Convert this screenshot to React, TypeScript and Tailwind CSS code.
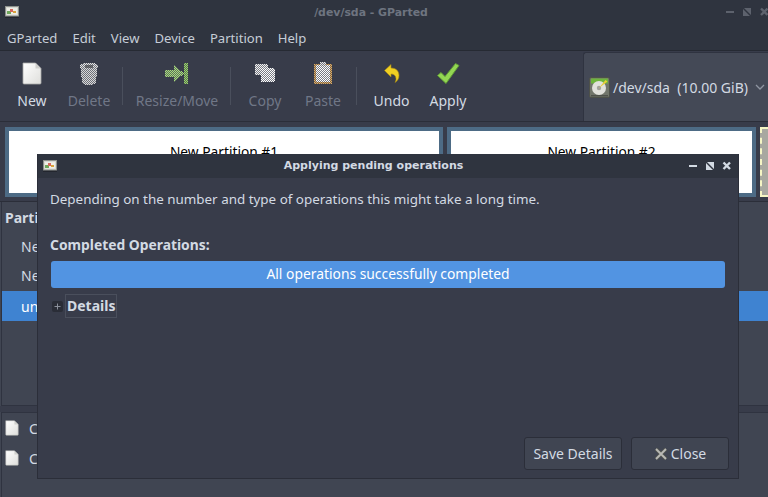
import type { ReactNode } from "react";

function AppIcon() {
  return (
    <svg width="14" height="12" viewBox="0 0 14 12">
      <rect x="0" y="10" width="14" height="2" fill="#23262e" />
      <rect x="0.500" y="0.500" width="13" height="9.500" fill="#d7d9d3" stroke="#8f928d" />
      <rect x="2" y="2" width="10" height="6.500" fill="#eeeee6" />
      <rect x="2" y="5" width="4" height="3" fill="#6fa85c" />
      <rect x="5" y="3" width="3" height="3" fill="#d66a5f" />
      <rect x="8" y="5" width="3" height="2" fill="#d8a23a" />
    </svg>
  );
}

function PageIcon({ w = 20, h = 23, id = "pg" }: { w?: number; h?: number; id?: string }) {
  return (
    <svg width={w} height={h} viewBox="0 0 20 23">
      <defs>
        <linearGradient id={id} x1="0" y1="0" x2="1" y2="1">
          <stop offset="0" stopColor="#ffffff" />
          <stop offset="1" stopColor="#dededb" />
        </linearGradient>
      </defs>
      <path d="M1 1h12.500l5.500 5.500V21a1 1 0 0 1-1 1H2a1 1 0 0 1-1-1z" fill={`url(#${id})`} stroke="#a9aaa8" strokeWidth="0.8" />
      <path d="M13.500 1v5.500H19z" fill="#cfcfcc" />
    </svg>
  );
}

function Dither({ id, w, h, children }: { id: string; w: number; h: number; children: ReactNode }) {
  return (
    <svg width={w} height={h} viewBox={`0 0 ${w} ${h}`} shapeRendering="crispEdges">
      <defs>
        <pattern id={`${id}p`} width="2" height="2" patternUnits="userSpaceOnUse">
          <rect x="0" y="0" width="1" height="1" fill="#fff" />
          <rect x="1" y="1" width="1" height="1" fill="#fff" />
          <rect x="1" y="0" width="1" height="1" fill="#555" />
          <rect x="0" y="1" width="1" height="1" fill="#555" />
        </pattern>
        <mask id={`${id}m`} maskUnits="userSpaceOnUse" x="0" y="0" width={w} height={h}>
          <rect width={w} height={h} fill={`url(#${id}p)`} />
        </mask>
      </defs>
      <g mask={`url(#${id}m)`}>{children}</g>
    </svg>
  );
}

function ToolButton({ icon, label, dim, className }: { icon: ReactNode; label: string; dim?: boolean; className: string }) {
  return (
    <div className={`flex flex-col items-center shrink-0 ${className}`}>
      <div className="h-[24px] flex items-center justify-center">{icon}</div>
      <div className={`mt-[6px] text-[14px] leading-[19px] whitespace-nowrap ${dim ? "text-[#707787]" : "text-[#d3dae3]"}`}>{label}</div>
    </div>
  );
}

function Sep() {
  return <div className="w-px h-[38px] bg-[#4a4f5c] shrink-0 mt-[6px]" />;
}

export default function App() {
  return (
    <div className='relative w-[768px] h-[497px] overflow-hidden bg-[#404552] [font-family:"Noto_Sans",sans-serif] text-[#d3dae3]'>
      {/* Title bar */}
      <div className="h-[26px] bg-[#2f343f] relative flex items-center justify-center pr-[26px]">
        <div className="absolute left-[5px] top-[6px]"><AppIcon /></div>
        <span className='[font-family:"DejaVu_Sans",sans-serif] text-[10.900px] font-bold text-[#6e7480]'>/dev/sda - GParted</span>
        <div className="absolute right-0 top-0 h-[24px]">
          <svg width="60" height="24" viewBox="0 0 60 24" className="block">
            <rect x="18" y="11" width="8" height="2" fill="#5d626d" />
            <path d="M36 8h7v7zM35 9v7h7z" fill="#5d626d" />
            <path d="M53 8.500l6.500 6.500M59.500 8.500l-6.500 6.500" stroke="#5d626d" strokeWidth="2.400" />
          </svg>
        </div>
      </div>
      {/* Menu */}
      <div className="h-[25px] pt-[1px] bg-[#2f343f] border-b border-[#262a33] flex items-center pl-[7px] gap-[15px] text-[13.100px] text-[#c6cdd7]">
        <span>GParted</span>
        <span>Edit</span>
        <span>View</span>
        <span>Device</span>
        <span>Partition</span>
        <span>Help</span>
      </div>
      {/* Toolbar */}
      <div className="h-[71px] flex border-b border-[#2b2e39] bg-[#383c4a]">
        <div className="flex-1 flex items-start pt-[10px] pl-[17px]">
          <ToolButton className="w-[30px]" label="New" icon={<PageIcon />} />
          <ToolButton className="w-[44px] ml-[20px]" dim label="Delete" icon={
            <Dither id="del" w={20} h={23}>
              <ellipse cx="10" cy="4.500" rx="9" ry="4" fill="#e2e2e2" />
              <path d="M1.500 5l1.500 15a7 3 0 0 0 14 0L18.500 5z" fill="#d8d8d8" />
              <ellipse cx="10" cy="4.500" rx="4.500" ry="1.800" fill="#777" />
            </Dither>
          } />
          <div className="ml-[11px]"><Sep /></div>
          <ToolButton className="w-[82px] ml-[13px]" dim label="Resize/Move" icon={
            <Dither id="rsz" w={24} h={21}>
              <path d="M0 7h9V2l10 8.500L9 19v-5H0z" fill="#a9dc7d" />
              <rect x="19" y="0" width="4" height="21" fill="#9ad568" />
            </Dither>
          } />
          <div className="ml-[12px]"><Sep /></div>
          <ToolButton className="w-[32px] ml-[18px]" dim label="Copy" icon={
            <Dither id="cpy" w={22} h={18}>
              <path d="M1 0h11l2 2v9H1z" fill="#f2f2f2" />
              <path d="M7 4h12l2 2v10l-2 2H7z" fill="#ffffff" />
            </Dither>
          } />
          <ToolButton className="w-[36px] ml-[24px]" dim label="Paste" icon={
            <Dither id="pst" w={18} h={22}>
              <rect x="0" y="2" width="18" height="20" fill="#e3ad5f" />
              <rect x="2" y="3" width="14" height="17" fill="#ffffff" />
              <rect x="6" y="0" width="6" height="4" fill="#e8e8e8" />
            </Dither>
          } />
          <div className="ml-[15px]"><Sep /></div>
          <ToolButton className="w-[35px] ml-[17px]" label="Undo" icon={
            <svg width="16" height="19" viewBox="0 0 16 19">
              <path d="M0.500 6.500 7 0.500v3.500c5 0 8 3 8 7.500 0 3-1.500 5.500-4 7 1-2 1.500-3.500 0.500-6-0.700-1.600-2.300-2.500-4.500-2.500V13z" fill="#f0cf22" stroke="#a98c12" strokeWidth="0.600" />
            </svg>
          } />
          <ToolButton className="w-[36px] ml-[21px]" label="Apply" icon={
            <svg width="24" height="23" viewBox="0 0 24 23">
              <path d="M1.500 13.500 5 10.500l4 4L19.500 1.500 23 3.500 10 21.500z" fill="#93d653" stroke="#5f9a35" strokeWidth="1" strokeLinejoin="round" />
            </svg>
          } />
        </div>
        <div className="w-[186px] pt-[1px] pl-[1px]">
          <div className="h-full bg-[#444956] border-l border-t border-[#2f3340] rounded-tl-[3px] flex items-center pl-[5px]">
            <svg width="21" height="21" viewBox="0 0 21 21" className="shrink-0">
              <rect x="0.500" y="0.500" width="20" height="20" rx="1.500" fill="#72766b" stroke="#4e5149" />
              <rect x="2" y="1.500" width="17" height="5" fill="#6eb53c" />
              <circle cx="10" cy="11" r="7" fill="#e2e2dc" />
              <circle cx="10" cy="11" r="2.200" fill="#a3a39c" />
              <path d="M10 11l6.500-8 2 1.500z" fill="#ecd034" />
              <rect x="2" y="18" width="17" height="1.500" fill="#4f524b" />
            </svg>
            <span className="ml-[3px] text-[14px] text-[#d3dae3] whitespace-pre">/dev/sda  (10.00 GiB)</span>
            <svg width="10" height="6" viewBox="0 0 10 6" className="ml-[7px]">
              <path d="M1 1l4 4 4-4" fill="none" stroke="#8f95a1" strokeWidth="1.300" />
            </svg>
          </div>
        </div>
      </div>
      {/* Partition map */}
      <div className="h-[80px] bg-[#383c4a] flex items-start pl-[5px] pt-[5px] border-b border-[#2b2e39] gap-[4px]">
        <div className="w-[438px] h-[70px] shrink-0 border-[4px] border-[#4d6b85] bg-white text-black text-[13.750px] text-center leading-[19px] pt-[11px] box-border">New Partition #1</div>
        <div className="w-[309px] h-[70px] shrink-0 border-[4px] border-[#4d6b85] bg-white text-black text-[13.750px] text-center leading-[19px] pt-[11px] box-border">New Partition #2</div>
        <div className="w-[12px] h-[70px] shrink-0 bg-[#a8a8a0] border-2 border-dashed border-[#f5f5c4] box-border" />
      </div>
      {/* Partition list */}
      <div className="h-[204px] ml-[1px] bg-[#404552] border-l border-[#2f3340] border-b text-[14px]">
        <div className="h-[30px] flex items-center pl-[3px] font-bold">Partition</div>
        <div className="h-[29px] flex items-center pl-[19px]">New Partition #1</div>
        <div className="h-[30px] flex items-center pl-[19px] pb-[1px]">New Partition #2</div>
        <div className="h-[30px] flex items-center pl-[19px] text-white bg-[#3f83d1]">unallocated</div>
      </div>
      {/* Pending ops */}
      <div className="h-[6px] bg-[#383c4a]" />
      <div className="ml-[1px] border-l border-t border-[#2f3340] h-[85px] text-[14px]">
        <div className="h-[30px] flex items-center pl-[3px]">
          <PageIcon w={14} h={16} id="pg2" /><span className="ml-[10px]">Create Primary Partition</span>
        </div>
        <div className="h-[30px] flex items-center pl-[3px]">
          <PageIcon w={14} h={16} id="pg3" /><span className="ml-[10px]">Create Primary Partition</span>
        </div>
      </div>
      {/* Dialog */}
      <div className="absolute left-[37px] top-[154px] w-[702px] h-[325px] bg-[#383c4a] border border-[#2b2e39] border-t-0 flex flex-col">
        <div className="h-[24px] bg-[#2f343f] shrink-0 relative flex items-center justify-center pr-[29px]">
          <div className="absolute left-[5px] top-[6px]"><AppIcon /></div>
          <span className='[font-family:"DejaVu_Sans",sans-serif] text-[11px] font-bold text-[#d3dae3]'>Applying pending operations</span>
          <div className="absolute right-0 top-0 h-[24px]">
            <svg width="60" height="24" viewBox="0 0 60 24" className="block">
              <rect x="11" y="11" width="8" height="2" fill="#d3dae3" />
              <path d="M29 8h7v7zM28 9v7h7z" fill="#d3dae3" />
              <path d="M45.500 8.500l6.500 6.500M52 8.500l-6.500 6.500" stroke="#d3dae3" strokeWidth="2.400" />
            </svg>
          </div>
        </div>
        <div className="px-[12px] pt-[12px] flex-1 flex flex-col">
          <div className="text-[13.420px] leading-[19px]">Depending on the number and type of operations this might take a long time.</div>
          <div className="mt-[26px] text-[13.850px] leading-[19px] font-bold">Completed Operations:</div>
          <div className="mt-[7px] ml-[1px] w-[674px] h-[27px] bg-[#5294e2] rounded-[3px] text-[13.850px] text-white flex items-center justify-center">
            All operations successfully completed
          </div>
          <div className="mt-[6px] flex items-center">
            <div className="ml-[2px] w-[11px] h-[11px] rounded-[2px] bg-[#2a2d37] flex items-center justify-center">
              <svg width="7" height="7" viewBox="0 0 7 7"><path d="M3.500 0.500v6M0.500 3.500h6" stroke="#8b909b" strokeWidth="1" /></svg>
            </div>
            <div className="ml-[2px] h-[24px] px-[1px] border border-[#4a4f5c] text-[14px] font-bold leading-[22px]">Details</div>
          </div>
          <div className="mt-auto mb-[8px] -mr-[3px] flex justify-end gap-[9px]">
            <div className="w-[98px] h-[33px] rounded-[3px] border border-[#2b2e39] bg-[#404552] text-[14px] flex items-center justify-center">Save Details</div>
            <div className="w-[98px] h-[33px] rounded-[3px] border border-[#2b2e39] bg-[#404552] text-[14px] flex items-center justify-center">
              <svg width="14" height="14" viewBox="0 0 14 14" className="mr-[3px]">
                <path d="M2 2l10 10M12 2L2 12" stroke="#555852" strokeWidth="3.500" />
                <path d="M2 2l10 10M12 2L2 12" stroke="#b9b9b5" strokeWidth="1.800" />
              </svg>
              Close
            </div>
          </div>
        </div>
      </div>
    </div>
  );
}
